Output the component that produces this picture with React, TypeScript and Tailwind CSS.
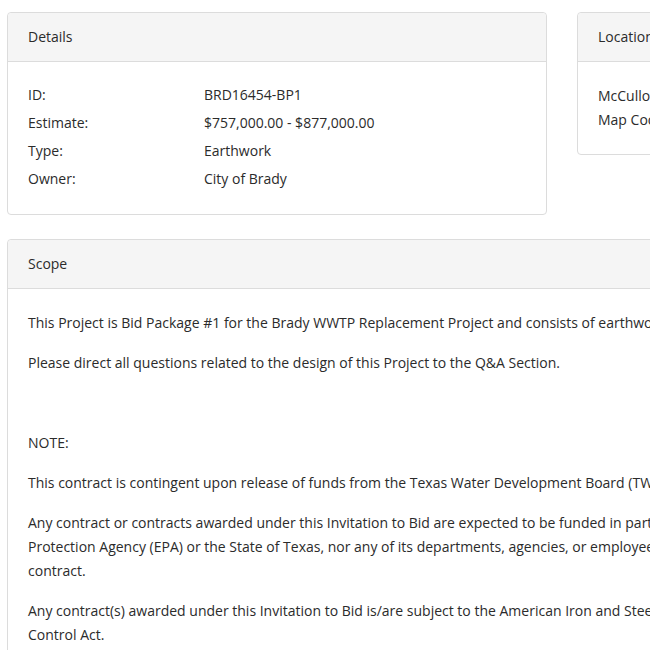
import React from 'react'

const font = { fontFamily: '"Open Sans", "Noto Sans", sans-serif' }

const Card: React.FC<{ title: string; className?: string; children: React.ReactNode }> = ({ title, className, children }) => {
  return (
    <div className={`border border-[#dcdcdc] rounded-[4px] bg-white ${className ?? ''}`}>
      <div className="h-[49px] flex items-center px-5 bg-[#f5f5f5] border-b border-[#dcdcdc] rounded-t-[4px]">
        {title}
      </div>
      {children}
    </div>
  )
}

const details = [
  ['ID:', 'BRD16454-BP1'],
  ['Estimate:', '$757,000.00 - $877,000.00'],
  ['Type:', 'Earthwork'],
  ['Owner:', 'City of Brady'],
]

export default function App() {
  return (
    <div className="w-[650px] h-[650px] overflow-hidden bg-white text-[14px] leading-6 text-[#2b2b2b]" style={font}>
      <div className="w-[1110px] ml-[7px] pt-3">
        <div className="grid grid-cols-2 gap-[30px] items-start">
          <Card title="Details">
            <div className="px-5 pt-[19px] pb-[21px]">
              {details.map(([k, v]) => (
                <div key={k} className="flex py-[2px]">
                  <div className="w-[176px]">{k}</div>
                  <div>{v}</div>
                </div>
              ))}
            </div>
          </Card>
          <Card title="Location">
            <div className="px-5 pt-[22px] pb-[22px]">
              <div>McCulloch County, Texas</div>
              <div>Map Coordinates</div>
            </div>
          </Card>
        </div>

        <Card title="Scope" className="mt-[24px]">
          <div className="px-5 pt-[22px] whitespace-nowrap">
            <p className="mb-4">
              This Project is Bid Package #1 for the Brady WWTP Replacement Project and consists of earthwork, site grading and drainage improvements for the new plant site.
            </p>
            <p className="mb-4">Please direct all questions related to the design of this Project to the Q&amp;A Section.</p>
            <p className="mb-4">&nbsp;</p>
            <p className="mb-4">NOTE:</p>
            <p className="mb-4">
              This contract is contingent upon release of funds from the Texas Water Development Board (TWDB).
            </p>
            <p className="mb-4">
              Any contract or contracts awarded under this Invitation to Bid are expected to be funded in part by financial assistance from the TWDB and the United States Environmental
              <br />
              Protection Agency (EPA) or the State of Texas, nor any of its departments, agencies, or employees is or will be a party to this Invitation to Bid or any resulting
              <br />
              contract.
            </p>
            <p className="mb-4">
              Any contract(s) awarded under this Invitation to Bid is/are subject to the American Iron and Steel (AIS) requirements of Section 608 of the Federal Water Pollution
              <br />
              Control Act.
            </p>
          </div>
        </Card>
      </div>
    </div>
  )
}
